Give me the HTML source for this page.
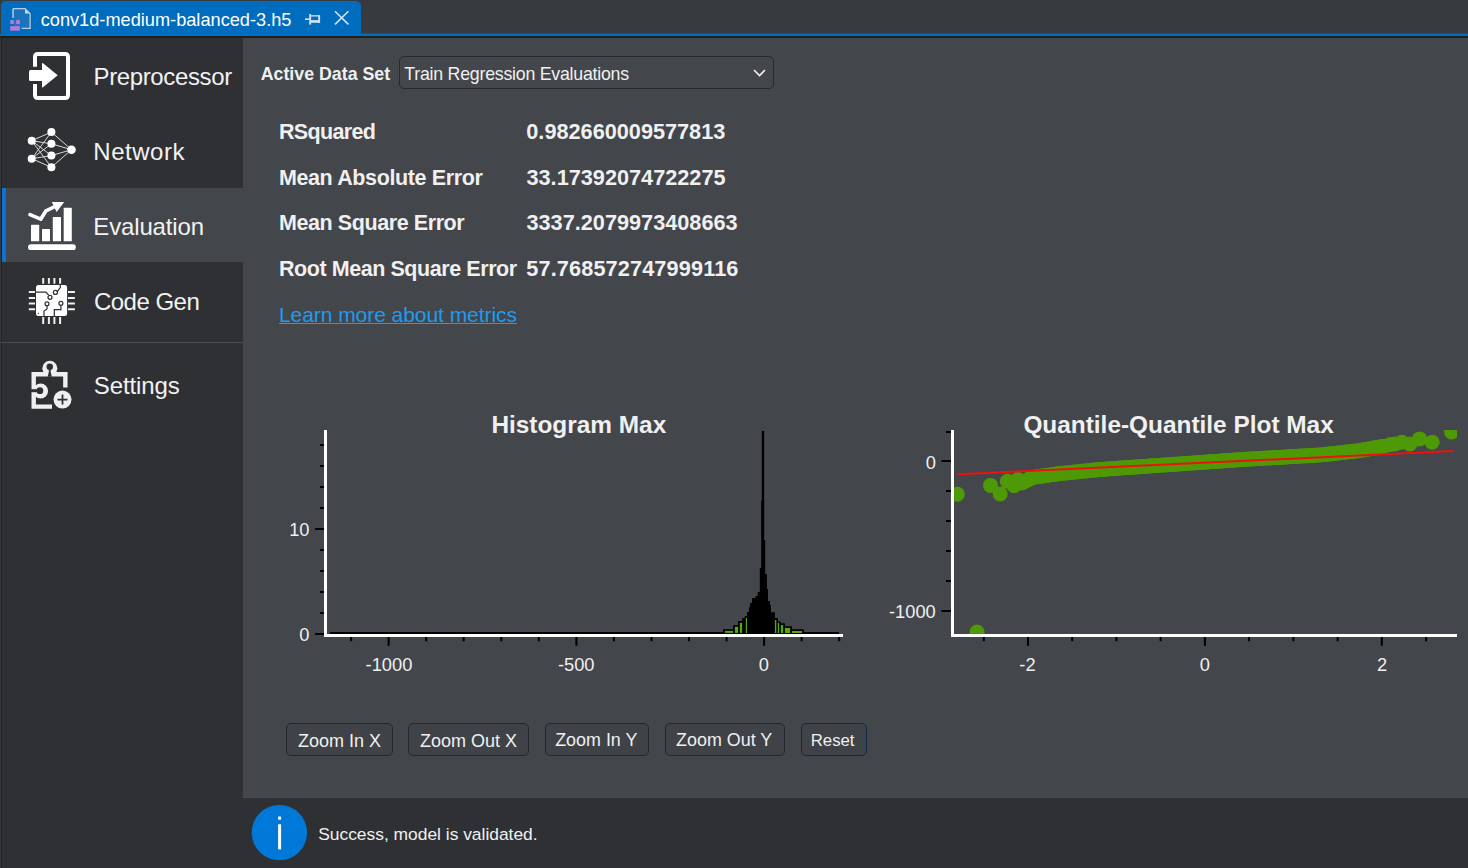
<!DOCTYPE html>
<html><head><meta charset="utf-8">
<style>
*{margin:0;padding:0;box-sizing:border-box}
html,body{width:1468px;height:868px;overflow:hidden;background:#383a3f;font-family:"Liberation Sans",sans-serif;color:#f0f0f0}
.a{position:absolute;white-space:nowrap;line-height:1}
#tabstrip{position:absolute;left:0;top:0;width:1468px;height:37px;background:#373a3e}
#tab{position:absolute;left:1px;top:1px;width:359.5px;height:35px;background:#006cbe;border-radius:5px 5px 0 0}
#tabline{position:absolute;left:0;top:33px;width:1468px;height:3px;background:linear-gradient(#17558a 33.3%,#006fc2 33.3%)}
#tabline2{position:absolute;left:1px;top:33px;width:359.5px;height:1px;background:#006cbe}
#tabdark{position:absolute;left:0;top:36px;width:1468px;height:2px;background:#1f2022}
#side{position:absolute;left:1px;top:38px;width:242px;height:830px;background:#2e3034;border-left:1px solid #212225}
#leftedge{position:absolute;left:0;top:38px;width:1px;height:830px;background:#35373b}
#main{position:absolute;left:243px;top:38px;width:1225px;height:760px;background:#43464b;border-bottom:1px solid #484b50}
#status{position:absolute;left:243px;top:798px;width:1225px;height:70px;background:#2e3034}
.sel{position:absolute;left:2px;top:188px;width:241px;height:74px;background:#43464b}
.selbar{position:absolute;left:2px;top:188px;width:4px;height:74px;background:#0a74d0}
.divider{position:absolute;left:1px;top:342px;width:242px;height:1px;background:#4a4c51}
.nav{font-size:24px;color:#f2f2f2}
.b{font-weight:bold}
.lbl{font-size:21.5px;font-weight:bold;color:#f0f0f0}
.val{font-size:21.7px;font-weight:bold;color:#f0f0f0}
.btn{position:absolute;top:723px;height:33px;border:1.5px solid #26272a;border-radius:5px;background:#3f4247}
.btxt{font-size:17.8px;color:#f0f0f0}
.ax{font-size:17.2px;color:#f0f0f0}
</style></head><body>
<div id="tabstrip"></div>
<div id="tab"></div>
<div id="tabline"></div>
<div id="tabline2"></div>
<div id="tabdark"></div>
<div id="leftedge"></div>
<div id="side"></div>
<div id="main"></div>
<div id="status"></div>
<div class="sel"></div>
<div class="selbar"></div>
<div class="divider"></div>

<!-- tab content -->
<svg class="a" style="left:0;top:0" width="40" height="36" viewBox="0 0 40 36">
  <path d="M13 8.7 H25 L30 13.8 V28.3 H21.5" fill="#1b73bb" stroke="#b5cde0" stroke-width="1.5"/>
  <path d="M13 18 V8.7" stroke="#b5cde0" stroke-width="1.5" fill="none"/>
  <path d="M14 9.5 H24.7 L29.3 14 V27.5 H14 Z" fill="#1a73bc"/>
  <path d="M25 8.7 V13.5 H30 Z" fill="#c8d6e2"/>
  <rect x="10.2" y="19.9" width="3.6" height="4.2" fill="#b17bd8"/>
  <rect x="16.1" y="19.9" width="3.8" height="4.2" fill="#b17bd8"/>
  <rect x="10.2" y="26.1" width="9.7" height="4.6" fill="#b17bd8"/>
</svg>
<div class="a" style="left:40.7px;top:10.6px;font-size:18.2px;color:#fff">conv1d-medium-balanced-3.h5</div>
<svg class="a" style="left:300px;top:5px" width="60" height="28" viewBox="300 5 60 28">
  <g fill="#d0e0ee">
  <rect x="305" y="18.4" width="4.5" height="1.6"/>
  <rect x="309.2" y="14" width="1.9" height="10.6"/>
  <rect x="311" y="15.2" width="9" height="1.3"/>
  <rect x="318.2" y="15.2" width="1.9" height="7.6"/>
  <rect x="311" y="20.1" width="9" height="2.7"/>
  </g>
  <path d="M335 11.2 L348.4 24.4 M348.4 11.2 L335 24.4" stroke="#d2e2ee" stroke-width="1.6"/>
</svg>

<!-- sidebar icons -->
<svg class="a" style="left:0;top:0" width="243" height="420" viewBox="0 0 243 420">
  <g fill="#fff" stroke="none">
    <!-- preprocessor -->
    <path d="M35 66.8 V57 Q35 54 38 54 H65 Q68 54 68 57 V95 Q68 98 65 98 H38 Q35 98 35 95 V84" fill="none" stroke="#fff" stroke-width="4"/>
    <rect x="29" y="69.9" width="14" height="11.1" rx="1.5"/>
    <path d="M42 63.5 Q42 62.5 43 63.3 L57.7 75.3 L43 87.3 Q42 88 42 87 Z"/>
    <!-- network -->
    <g stroke="#d8d8d8" stroke-width="1" fill="none">
      <path d="M31.7 140.7 L51.4 132.1 M31.7 140.7 L51.4 143.8 M31.7 140.7 L51.4 155.6 M31.7 140.7 L51.4 167.3 M31.7 158.7 L51.4 132.1 M31.7 158.7 L51.4 143.8 M31.7 158.7 L51.4 155.6 M31.7 158.7 L51.4 167.3 M51.4 132.1 L71.5 149.7 M51.4 143.8 L71.5 149.7 M51.4 155.6 L71.5 149.7 M51.4 167.3 L71.5 149.7"/>
    </g>
    <circle cx="31.7" cy="140.7" r="4"/><circle cx="31.7" cy="158.7" r="4"/>
    <circle cx="51.4" cy="132.1" r="4"/><circle cx="51.4" cy="143.8" r="4"/><circle cx="51.4" cy="155.6" r="4"/><circle cx="51.4" cy="167.3" r="4"/>
    <circle cx="71.5" cy="149.7" r="4.3"/>
    <!-- evaluation -->
    <rect x="28" y="244.2" width="47.8" height="5.9" rx="2.9"/>
    <rect x="31" y="224.7" width="8.2" height="16.5" rx="0.5"/>
    <rect x="42" y="228.9" width="8" height="12.3" rx="0.5"/>
    <rect x="52.8" y="217" width="8.2" height="24.2" rx="0.5"/>
    <rect x="63.7" y="207.8" width="8.1" height="33.4" rx="0.5"/>
    <path d="M30 214.7 L40.7 219.2 L46 210.8 L56 206" fill="none" stroke="#fff" stroke-width="3.6" stroke-linecap="round" stroke-linejoin="round"/>
    <path d="M51.8 201.9 L64.2 201.9 L56.6 211.9 Z"/>
    <!-- code gen -->
    <rect x="36" y="284.9" width="31.1" height="31.1" rx="2.5"/>
    <g stroke="#f0f0f0" stroke-width="2">
      <path d="M43.2 278 V283.8 M48.9 278 V283.8 M54.4 278 V283.8 M60.1 278 V283.8"/>
      <path d="M43.2 317 V323.9 M48.9 317 V323.9 M54.4 317 V323.9 M60.1 317 V323.9"/>
      <path d="M28.8 292.1 H35 M28.8 298 H35 M28.8 303.5 H35 M28.8 309.3 H35"/>
      <path d="M68 292.1 H74.9 M68 298 H74.9 M68 303.5 H74.9 M68 309.3 H74.9"/>
    </g>
    <g stroke="#2e3034" stroke-width="1.2" fill="none">
      <path d="M36 292.2 H46 L48.6 295.2"/>
      <circle cx="50" cy="297.3" r="2"/>
      <path d="M60.3 284.9 V287.5 L57 291.8"/>
      <circle cx="55.4" cy="292.4" r="2"/>
      <circle cx="47" cy="303.8" r="2"/>
      <path d="M47 305.8 V309 L44 311 V316"/>
      <circle cx="60.9" cy="303.3" r="2"/>
      <path d="M60.9 305.3 V309.6 H54.3 V316"/>
      <circle cx="38.4" cy="313.4" r="0.6" fill="#2e3034" stroke="none"/>
    </g>
    <!-- settings -->
    <path d="M33.7 372 V406.6 H52 M33.6 374.2 H65.35 V387.5" fill="none" stroke="#f0f0f0" stroke-width="4.4"/>
    <circle cx="49.85" cy="368.3" r="7.5" fill="#f0f0f0"/>
    <circle cx="40.6" cy="391" r="7.5" fill="#f0f0f0"/>
    <circle cx="49.75" cy="366.8" r="3.25" fill="#2e3034"/>
    <path d="M48.6 368.5 L50.9 368.5 L50.6 371.5 L51.8 376.7 L47.7 376.7 L48.9 371.5 Z" fill="#2e3034"/>
    <circle cx="39.9" cy="390.7" r="3.4" fill="#2e3034"/>
    <rect x="30" y="389.2" width="9" height="3" fill="#2e3034"/>
    <circle cx="62.5" cy="399.6" r="11" fill="#2e3034"/>
    <circle cx="62.5" cy="399.6" r="9" fill="#f0f0f0"/>
    <path d="M57.5 399.6 H67.5 M62.5 394.6 V404.6" stroke="#2e3034" stroke-width="1.8"/>
  </g>
</svg>
<div class="a nav" style="left:93.5px;top:64.9px;letter-spacing:-0.37px">Preprocessor</div>
<div class="a nav" style="left:93.3px;top:139.6px;letter-spacing:0.53px">Network</div>
<div class="a nav" style="left:93.3px;top:215px;letter-spacing:-0.15px">Evaluation</div>
<div class="a nav" style="left:93.9px;top:289.9px;letter-spacing:-0.51px">Code Gen</div>
<div class="a nav" style="left:93.8px;top:373.7px;letter-spacing:-0.11px">Settings</div>

<!-- active data set -->
<div class="a b" style="left:260.7px;top:65.8px;font-size:17.8px">Active Data Set</div>
<div class="a" style="left:399px;top:56px;width:375px;height:33px;border:1.5px solid #28292c;border-radius:5px;background:#43464b"></div>
<div class="a" style="left:404.3px;top:65.5px;font-size:17.8px;letter-spacing:-0.25px">Train Regression Evaluations</div>
<svg class="a" style="left:750px;top:65px" width="20" height="16" viewBox="750 65 20 16"><path d="M754 70 L759.5 75.5 L765 70" fill="none" stroke="#f0f0f0" stroke-width="1.6"/></svg>

<!-- metrics -->
<div class="a lbl" style="left:278.9px;top:122px;letter-spacing:-0.65px">RSquared</div>
<div class="a lbl" style="left:278.9px;top:168px;letter-spacing:-0.37px">Mean Absolute Error</div>
<div class="a lbl" style="left:278.9px;top:213px;letter-spacing:-0.41px">Mean Square Error</div>
<div class="a lbl" style="left:278.9px;top:259px;letter-spacing:-0.43px">Root Mean Square Error</div>
<div class="a val" style="left:526.3px;top:121.1px">0.982660009577813</div>
<div class="a val" style="left:526.5px;top:167.1px">33.17392074722275</div>
<div class="a val" style="left:526.5px;top:212.1px">3337.2079973408663</div>
<div class="a val" style="left:526.3px;top:258.1px;letter-spacing:0.13px">57.768572747999116</div>
<div class="a" style="left:278.9px;top:304.3px;font-size:21px;color:#1e9cf0;letter-spacing:-0.05px">Learn more about metrics</div>
<div class="a" style="left:279px;top:322.6px;width:237.5px;height:1.4px;background:#1e9cf0"></div>

<!-- chart titles -->
<div class="a b" style="left:491.4px;top:413px;font-size:24.4px">Histogram Max</div>
<div class="a b" style="left:1023.4px;top:412.8px;font-size:24.4px">Quantile-Quantile Plot Max</div>

<!-- charts -->
<svg class="a" style="left:0;top:0" width="1468" height="700" viewBox="0 0 1468 700">
  <defs><clipPath id="qqclip"><rect x="954" y="430" width="503" height="204"/></clipPath></defs>
  <!-- histogram -->
  <path fill="#000" d="M330 632 H723 V629.2 H733.1 V625.2 H738 V621.1 H742.2 V618 H744.8 V616 H747 V612 H749 V607.2 H750 V603 H752 V598 H755.5 V596 H757.7 V592 H759.8 V568 H761.2 V500.6 H761.8 V431 H764.2 V540 H765.2 V574 H766.9 V589 H768 V601 H770 V605.2 H771 V612.2 H774.9 V618 H778 V621.4 H780.7 V623.2 H784.9 V626.2 H792 V629.2 H803.9 V632 H839 V634 H330 Z"/>
  <g fill="#56a80c">
    <rect x="724.9" y="630.9" width="8.2" height="2"/>
    <rect x="734.9" y="626.8" width="3.2" height="6.1"/>
    <rect x="739.8" y="622.9" width="2.3" height="10"/>
    <rect x="745.8" y="618" width="1.2" height="15"/>
    <rect x="774.9" y="620" width="1.4" height="13"/>
    <rect x="777.8" y="622.9" width="1.4" height="10.1"/>
    <rect x="780.9" y="625" width="2.3" height="8"/>
    <rect x="784.9" y="627.9" width="5.2" height="5.1"/>
    <rect x="792" y="631" width="10" height="2"/>
  </g>
  <rect x="324" y="430" width="3" height="207" fill="#fff"/>
  <rect x="324" y="634" width="519" height="3" fill="#fff"/>
  <g fill="#000">
    <rect x="315" y="633" width="9" height="2"/>
    <rect x="315" y="528" width="9" height="2"/>
    <rect x="320" y="612" width="4" height="2"/>
    <rect x="320" y="591" width="4" height="2"/>
    <rect x="320" y="570" width="4" height="2"/>
    <rect x="320" y="549" width="4" height="2"/>
    <rect x="320" y="507" width="4" height="2"/>
    <rect x="320" y="486" width="4" height="2"/>
    <rect x="320" y="465" width="4" height="2"/>
    <rect x="320" y="444" width="4" height="2"/>
  </g>
  <g fill="#000" id="hxt"></g>
  <rect x="350.1" y="637" width="2" height="4.2" fill="#000"/><rect x="387.6" y="637" width="2" height="8.8" fill="#000"/><rect x="425.2" y="637" width="2" height="4.2" fill="#000"/><rect x="462.7" y="637" width="2" height="4.2" fill="#000"/><rect x="500.3" y="637" width="2" height="4.2" fill="#000"/><rect x="537.8" y="637" width="2" height="4.2" fill="#000"/><rect x="575.4" y="637" width="2" height="8.8" fill="#000"/><rect x="612.9" y="637" width="2" height="4.2" fill="#000"/><rect x="650.5" y="637" width="2" height="4.2" fill="#000"/><rect x="688.0" y="637" width="2" height="4.2" fill="#000"/><rect x="725.6" y="637" width="2" height="4.2" fill="#000"/><rect x="763.1" y="637" width="2" height="8.8" fill="#000"/><rect x="800.6" y="637" width="2" height="4.2" fill="#000"/><rect x="838.2" y="637" width="2" height="4.2" fill="#000"/>
  <!-- qq -->
  <g clip-path="url(#qqclip)" fill="#4e9a06"><circle cx="1022.0" cy="483.0" r="7.5"/><circle cx="1024.0" cy="481.9" r="7.5"/><circle cx="1026.0" cy="480.8" r="7.5"/><circle cx="1028.0" cy="479.7" r="7.5"/><circle cx="1030.0" cy="478.6" r="7.5"/><circle cx="1032.0" cy="477.5" r="7.5"/><circle cx="1034.0" cy="477.2" r="7.5"/><circle cx="1036.0" cy="476.9" r="7.5"/><circle cx="1038.0" cy="476.6" r="7.5"/><circle cx="1040.0" cy="476.4" r="7.5"/><circle cx="1042.0" cy="476.1" r="7.5"/><circle cx="1044.0" cy="475.8" r="7.5"/><circle cx="1046.0" cy="475.5" r="7.5"/><circle cx="1048.0" cy="475.2" r="7.5"/><circle cx="1050.0" cy="474.9" r="7.5"/><circle cx="1052.0" cy="474.6" r="7.5"/><circle cx="1054.0" cy="474.4" r="7.5"/><circle cx="1056.0" cy="474.1" r="7.5"/><circle cx="1058.0" cy="473.8" r="7.5"/><circle cx="1060.0" cy="473.5" r="7.5"/><circle cx="1062.0" cy="473.3" r="7.5"/><circle cx="1064.0" cy="473.1" r="7.5"/><circle cx="1066.0" cy="472.9" r="7.5"/><circle cx="1068.0" cy="472.7" r="7.5"/><circle cx="1070.0" cy="472.5" r="7.5"/><circle cx="1072.0" cy="472.3" r="7.5"/><circle cx="1074.0" cy="472.1" r="7.5"/><circle cx="1076.0" cy="471.9" r="7.5"/><circle cx="1078.0" cy="471.7" r="7.5"/><circle cx="1080.0" cy="471.5" r="7.5"/><circle cx="1082.0" cy="471.3" r="7.5"/><circle cx="1084.0" cy="471.1" r="7.5"/><circle cx="1086.0" cy="470.9" r="7.5"/><circle cx="1088.0" cy="470.7" r="7.5"/><circle cx="1090.0" cy="470.5" r="7.5"/><circle cx="1092.0" cy="470.3" r="7.5"/><circle cx="1094.0" cy="470.1" r="7.5"/><circle cx="1096.0" cy="469.9" r="7.5"/><circle cx="1098.0" cy="469.7" r="7.5"/><circle cx="1100.0" cy="469.5" r="7.5"/><circle cx="1102.0" cy="469.4" r="7.5"/><circle cx="1104.0" cy="469.2" r="7.5"/><circle cx="1106.0" cy="469.1" r="7.5"/><circle cx="1108.0" cy="468.9" r="7.5"/><circle cx="1110.0" cy="468.8" r="7.5"/><circle cx="1112.0" cy="468.7" r="7.5"/><circle cx="1114.0" cy="468.5" r="7.5"/><circle cx="1116.0" cy="468.4" r="7.5"/><circle cx="1118.0" cy="468.2" r="7.5"/><circle cx="1120.0" cy="468.1" r="7.5"/><circle cx="1122.0" cy="468.0" r="7.5"/><circle cx="1124.0" cy="467.8" r="7.5"/><circle cx="1126.0" cy="467.7" r="7.5"/><circle cx="1128.0" cy="467.5" r="7.5"/><circle cx="1130.0" cy="467.4" r="7.5"/><circle cx="1132.0" cy="467.3" r="7.5"/><circle cx="1134.0" cy="467.1" r="7.5"/><circle cx="1136.0" cy="467.0" r="7.5"/><circle cx="1138.0" cy="466.8" r="7.5"/><circle cx="1140.0" cy="466.7" r="7.5"/><circle cx="1142.0" cy="466.5" r="7.5"/><circle cx="1144.0" cy="466.4" r="7.5"/><circle cx="1146.0" cy="466.3" r="7.5"/><circle cx="1148.0" cy="466.1" r="7.5"/><circle cx="1150.0" cy="466.0" r="7.5"/><circle cx="1152.0" cy="465.8" r="7.5"/><circle cx="1154.0" cy="465.7" r="7.5"/><circle cx="1156.0" cy="465.6" r="7.5"/><circle cx="1158.0" cy="465.4" r="7.5"/><circle cx="1160.0" cy="465.3" r="7.5"/><circle cx="1162.0" cy="465.1" r="7.5"/><circle cx="1164.0" cy="465.0" r="7.5"/><circle cx="1166.0" cy="464.9" r="7.5"/><circle cx="1168.0" cy="464.7" r="7.5"/><circle cx="1170.0" cy="464.6" r="7.5"/><circle cx="1172.0" cy="464.4" r="7.5"/><circle cx="1174.0" cy="464.3" r="7.5"/><circle cx="1176.0" cy="464.2" r="7.5"/><circle cx="1178.0" cy="464.0" r="7.5"/><circle cx="1180.0" cy="463.9" r="7.5"/><circle cx="1182.0" cy="463.7" r="7.5"/><circle cx="1184.0" cy="463.6" r="7.5"/><circle cx="1186.0" cy="463.5" r="7.5"/><circle cx="1188.0" cy="463.3" r="7.5"/><circle cx="1190.0" cy="463.2" r="7.5"/><circle cx="1192.0" cy="463.0" r="7.5"/><circle cx="1194.0" cy="462.9" r="7.5"/><circle cx="1196.0" cy="462.8" r="7.5"/><circle cx="1198.0" cy="462.6" r="7.5"/><circle cx="1200.0" cy="462.5" r="7.5"/><circle cx="1202.0" cy="462.3" r="7.5"/><circle cx="1204.0" cy="462.2" r="7.5"/><circle cx="1206.0" cy="462.1" r="7.5"/><circle cx="1208.0" cy="461.9" r="7.5"/><circle cx="1210.0" cy="461.8" r="7.5"/><circle cx="1212.0" cy="461.6" r="7.5"/><circle cx="1214.0" cy="461.5" r="7.5"/><circle cx="1216.0" cy="461.4" r="7.5"/><circle cx="1218.0" cy="461.2" r="7.5"/><circle cx="1220.0" cy="461.1" r="7.5"/><circle cx="1222.0" cy="461.0" r="7.5"/><circle cx="1224.0" cy="460.8" r="7.5"/><circle cx="1226.0" cy="460.7" r="7.5"/><circle cx="1228.0" cy="460.5" r="7.5"/><circle cx="1230.0" cy="460.4" r="7.5"/><circle cx="1232.0" cy="460.3" r="7.5"/><circle cx="1234.0" cy="460.1" r="7.5"/><circle cx="1236.0" cy="460.0" r="7.5"/><circle cx="1238.0" cy="459.8" r="7.5"/><circle cx="1240.0" cy="459.7" r="7.5"/><circle cx="1242.0" cy="459.6" r="7.5"/><circle cx="1244.0" cy="459.4" r="7.5"/><circle cx="1246.0" cy="459.3" r="7.5"/><circle cx="1248.0" cy="459.1" r="7.5"/><circle cx="1250.0" cy="459.0" r="7.5"/><circle cx="1252.0" cy="458.9" r="7.5"/><circle cx="1254.0" cy="458.8" r="7.5"/><circle cx="1256.0" cy="458.7" r="7.5"/><circle cx="1258.0" cy="458.5" r="7.5"/><circle cx="1260.0" cy="458.4" r="7.5"/><circle cx="1262.0" cy="458.3" r="7.5"/><circle cx="1264.0" cy="458.2" r="7.5"/><circle cx="1266.0" cy="458.1" r="7.5"/><circle cx="1268.0" cy="458.0" r="7.5"/><circle cx="1270.0" cy="457.9" r="7.5"/><circle cx="1272.0" cy="457.7" r="7.5"/><circle cx="1274.0" cy="457.6" r="7.5"/><circle cx="1276.0" cy="457.5" r="7.5"/><circle cx="1278.0" cy="457.4" r="7.5"/><circle cx="1280.0" cy="457.3" r="7.5"/><circle cx="1282.0" cy="457.2" r="7.5"/><circle cx="1284.0" cy="457.1" r="7.5"/><circle cx="1286.0" cy="456.9" r="7.5"/><circle cx="1288.0" cy="456.8" r="7.5"/><circle cx="1290.0" cy="456.7" r="7.5"/><circle cx="1292.0" cy="456.6" r="7.5"/><circle cx="1294.0" cy="456.5" r="7.5"/><circle cx="1296.0" cy="456.4" r="7.5"/><circle cx="1298.0" cy="456.3" r="7.5"/><circle cx="1300.0" cy="456.1" r="7.5"/><circle cx="1302.0" cy="456.0" r="7.5"/><circle cx="1304.0" cy="455.9" r="7.5"/><circle cx="1306.0" cy="455.8" r="7.5"/><circle cx="1308.0" cy="455.7" r="7.5"/><circle cx="1310.0" cy="455.6" r="7.5"/><circle cx="1312.0" cy="455.5" r="7.5"/><circle cx="1314.0" cy="455.3" r="7.5"/><circle cx="1316.0" cy="455.2" r="7.5"/><circle cx="1318.0" cy="455.1" r="7.5"/><circle cx="1320.0" cy="455.0" r="7.5"/><circle cx="1322.0" cy="454.8" r="7.5"/><circle cx="1324.0" cy="454.6" r="7.5"/><circle cx="1326.0" cy="454.3" r="7.5"/><circle cx="1328.0" cy="454.1" r="7.5"/><circle cx="1330.0" cy="453.9" r="7.5"/><circle cx="1332.0" cy="453.6" r="7.5"/><circle cx="1334.0" cy="453.4" r="7.5"/><circle cx="1336.0" cy="453.2" r="7.5"/><circle cx="1338.0" cy="453.0" r="7.5"/><circle cx="1340.0" cy="452.8" r="7.5"/><circle cx="1342.0" cy="452.5" r="7.5"/><circle cx="1344.0" cy="452.3" r="7.5"/><circle cx="1346.0" cy="452.1" r="7.5"/><circle cx="1348.0" cy="451.9" r="7.5"/><circle cx="1350.0" cy="451.6" r="7.5"/><circle cx="1352.0" cy="451.4" r="7.5"/><circle cx="1354.0" cy="451.2" r="7.5"/><circle cx="1356.0" cy="450.9" r="7.5"/><circle cx="1358.0" cy="450.7" r="7.5"/><circle cx="1360.0" cy="450.5" r="7.5"/><circle cx="1362.0" cy="450.1" r="7.5"/><circle cx="1364.0" cy="449.8" r="7.5"/><circle cx="1366.0" cy="449.4" r="7.5"/><circle cx="1368.0" cy="449.1" r="7.5"/><circle cx="1370.0" cy="448.7" r="7.5"/><circle cx="1372.0" cy="448.3" r="7.5"/><circle cx="1374.0" cy="448.0" r="7.5"/><circle cx="1376.0" cy="447.6" r="7.5"/><circle cx="1378.0" cy="447.3" r="7.5"/><circle cx="1380.0" cy="446.9" r="7.5"/><circle cx="1382.0" cy="446.5" r="7.5"/><circle cx="1384.0" cy="446.2" r="7.5"/><circle cx="957.4" cy="494.3" r="7.5"/><circle cx="990.5" cy="485.4" r="7.5"/><circle cx="1000.2" cy="494.0" r="7.5"/><circle cx="1007.3" cy="481.3" r="7.5"/><circle cx="1014.1" cy="485.8" r="7.5"/><circle cx="1018.0" cy="479.5" r="7.5"/><circle cx="1390.4" cy="444.6" r="7.5"/><circle cx="1395.0" cy="444.0" r="7.5"/><circle cx="1401.9" cy="442.3" r="7.5"/><circle cx="1409.9" cy="444.0" r="7.5"/><circle cx="1419.6" cy="438.9" r="7.5"/><circle cx="1432.2" cy="442.3" r="7.5"/><circle cx="1451.6" cy="432.0" r="7.5"/><circle cx="977.0" cy="632.0" r="7.5"/></g>
  <path d="M957.3 474.3 L1452.8 451.1" stroke="#f01010" stroke-width="2"/>
  <rect x="951" y="430" width="3" height="207" fill="#fff"/>
  <rect x="951" y="634" width="506" height="3" fill="#fff"/>
  <g fill="#000">
    <rect x="941.5" y="460" width="9.5" height="2"/>
    <rect x="941.5" y="610" width="9.5" height="2"/>
    <rect x="946" y="431" width="5" height="2"/>
    <rect x="946" y="490" width="5" height="2"/>
    <rect x="946" y="520" width="5" height="2"/>
    <rect x="946" y="550" width="5" height="2"/>
    <rect x="946" y="580" width="5" height="2"/>
  </g>
  <rect x="982.8" y="637" width="2" height="4.2" fill="#000"/><rect x="1027.0" y="637" width="2" height="8.8" fill="#000"/><rect x="1071.2" y="637" width="2" height="4.2" fill="#000"/><rect x="1115.4" y="637" width="2" height="4.2" fill="#000"/><rect x="1159.7" y="637" width="2" height="4.2" fill="#000"/><rect x="1203.9" y="637" width="2" height="8.8" fill="#000"/><rect x="1248.1" y="637" width="2" height="4.2" fill="#000"/><rect x="1292.4" y="637" width="2" height="4.2" fill="#000"/><rect x="1336.6" y="637" width="2" height="4.2" fill="#000"/><rect x="1380.8" y="637" width="2" height="8.8" fill="#000"/><rect x="1425.1" y="637" width="2" height="4.2" fill="#000"/>
</svg>
<!-- axis labels -->
<div class="a ax" style="left:239.0px;width:300px;text-align:center;top:655.8px;font-size:18.3px">-1000</div>
<div class="a ax" style="left:426.2px;width:300px;text-align:center;top:655.8px;font-size:18.3px">-500</div>
<div class="a ax" style="left:613.9px;width:300px;text-align:center;top:655.8px;font-size:18.3px">0</div>
<div class="a ax" style="left:9.5px;width:300px;text-align:right;top:520.8px;font-size:18.3px">10</div>
<div class="a ax" style="left:9.5px;width:300px;text-align:right;top:625.8px;font-size:18.3px">0</div>
<div class="a ax" style="left:877.5px;width:300px;text-align:center;top:656.1px;font-size:18.3px">-2</div>
<div class="a ax" style="left:1054.8px;width:300px;text-align:center;top:656.1px;font-size:18.3px">0</div>
<div class="a ax" style="left:1232.0px;width:300px;text-align:center;top:656.1px;font-size:18.3px">2</div>
<div class="a ax" style="left:635.8px;width:300px;text-align:right;top:453.9px;font-size:18.3px">0</div>
<div class="a ax" style="left:635.8px;width:300px;text-align:right;top:602.9px;font-size:18.3px">-1000</div>

<!-- buttons -->
<div class="btn" style="left:286px;width:107px"></div>
<div class="btn" style="left:408px;width:121px"></div>
<div class="btn" style="left:544.5px;width:104px"></div>
<div class="btn" style="left:664.5px;width:120px"></div>
<div class="btn" style="left:800.5px;width:66px;border:1.8px solid #0f2a46"></div>
<div class="a btxt" style="left:298.1px;top:731.6px;font-size:18px">Zoom In X</div>
<div class="a btxt" style="left:420px;top:731.6px;font-size:18px">Zoom Out X</div>
<div class="a btxt" style="left:555.2px;top:731.8px;font-size:17.9px">Zoom In Y</div>
<div class="a btxt" style="left:676.1px;top:731.7px;font-size:17.9px">Zoom Out Y</div>
<div class="a btxt" style="left:810.7px;top:732.7px;font-size:16.8px">Reset</div>

<!-- status -->
<svg class="a" style="left:250px;top:804px" width="60" height="60" viewBox="250 804 60 60">
  <circle cx="279.4" cy="832.6" r="27.7" fill="#0078d7"/>
  <rect x="278.1" y="816.4" width="3" height="3.3" rx="0.6" fill="#fff"/>
  <rect x="278.1" y="824.3" width="3" height="25.1" fill="#fff"/>
</svg>
<div class="a" style="left:318.2px;top:825.8px;font-size:17.4px;color:#f0f0f0">Success, model is validated.</div>
</body></html>
